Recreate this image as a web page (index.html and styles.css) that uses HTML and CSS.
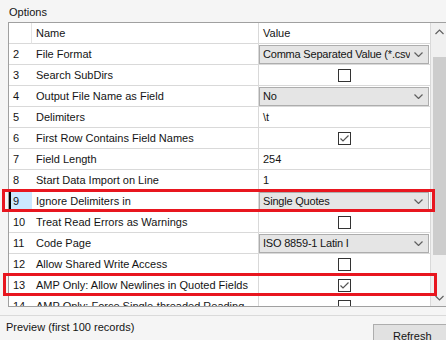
FILE: index.html
```html
<!DOCTYPE html>
<html lang="en">
<head>
    <meta charset="UTF-8">
    <title>Input Data Options</title>
    <link rel="stylesheet" href="styles.css">
</head>
<body>
    <div class="options-title">Options</div>
    <div class="grid-frame">
        <div class="grid">
            <div class="row header">
                <div class="cell num"></div>
                <div class="cell name">Name</div>
                <div class="cell value">Value</div>
            </div>
            <div class="row">
                <div class="cell num">2</div>
                <div class="cell name">File Format</div>
                <div class="cell value"><div class="combo"><span>Comma Separated Value (*.csv)</span><svg class="chev" width="9" height="5" viewBox="0 0 9 5"><polyline points="0.5,0.5 4.5,4.5 8.5,0.5" /></svg></div></div>
            </div>
            <div class="row">
                <div class="cell num">3</div>
                <div class="cell name">Search SubDirs</div>
                <div class="cell value check"><svg width="13" height="13" viewBox="0 0 13 13"><rect x="0.5" y="0.5" width="12" height="12" /></svg></div>
            </div>
            <div class="row">
                <div class="cell num">4</div>
                <div class="cell name">Output File Name as Field</div>
                <div class="cell value"><div class="combo"><span>No</span><svg class="chev" width="9" height="5" viewBox="0 0 9 5"><polyline points="0.5,0.5 4.5,4.5 8.5,0.5" /></svg></div></div>
            </div>
            <div class="row">
                <div class="cell num">5</div>
                <div class="cell name">Delimiters</div>
                <div class="cell value">\t</div>
            </div>
            <div class="row">
                <div class="cell num">6</div>
                <div class="cell name">First Row Contains Field Names</div>
                <div class="cell value check"><svg width="13" height="13" viewBox="0 0 13 13"><rect x="0.5" y="0.5" width="12" height="12" /><polyline class="tick" points="2.5,6.5 5,9 10.5,3.5" /></svg></div>
            </div>
            <div class="row">
                <div class="cell num">7</div>
                <div class="cell name">Field Length</div>
                <div class="cell value">254</div>
            </div>
            <div class="row">
                <div class="cell num">8</div>
                <div class="cell name">Start Data Import on Line</div>
                <div class="cell value">1</div>
            </div>
            <div class="row selected">
                <div class="cell num">9</div>
                <div class="cell name">Ignore Delimiters in</div>
                <div class="cell value"><div class="combo"><span>Single Quotes</span><svg class="chev" width="9" height="5" viewBox="0 0 9 5"><polyline points="0.5,0.5 4.5,4.5 8.5,0.5" /></svg></div></div>
            </div>
            <div class="row">
                <div class="cell num">10</div>
                <div class="cell name">Treat Read Errors as Warnings</div>
                <div class="cell value check"><svg width="13" height="13" viewBox="0 0 13 13"><rect x="0.5" y="0.5" width="12" height="12" /></svg></div>
            </div>
            <div class="row">
                <div class="cell num">11</div>
                <div class="cell name">Code Page</div>
                <div class="cell value"><div class="combo"><span>ISO 8859-1 Latin I</span><svg class="chev" width="9" height="5" viewBox="0 0 9 5"><polyline points="0.5,0.5 4.5,4.5 8.5,0.5" /></svg></div></div>
            </div>
            <div class="row">
                <div class="cell num">12</div>
                <div class="cell name">Allow Shared Write Access</div>
                <div class="cell value check"><svg width="13" height="13" viewBox="0 0 13 13"><rect x="0.5" y="0.5" width="12" height="12" /></svg></div>
            </div>
            <div class="row">
                <div class="cell num">13</div>
                <div class="cell name">AMP Only: Allow Newlines in Quoted Fields</div>
                <div class="cell value check"><svg width="13" height="13" viewBox="0 0 13 13"><rect x="0.5" y="0.5" width="12" height="12" /><polyline class="tick" points="2.5,6.5 5,9 10.5,3.5" /></svg></div>
            </div>
            <div class="row">
                <div class="cell num">14</div>
                <div class="cell name">AMP Only: Force Single-threaded Reading</div>
                <div class="cell value check"><svg width="13" height="13" viewBox="0 0 13 13"><rect x="0.5" y="0.5" width="12" height="12" /></svg></div>
            </div>
        </div>
        <div class="vscroll">
            <div class="arrow"><svg width="9" height="6" viewBox="0 0 9 6"><polyline points="0.5,5 4.5,1 8.5,5" /></svg></div>
            <div class="track"><div class="thumb"></div></div>
            <div class="arrow"><svg width="9" height="6" viewBox="0 0 9 6"><polyline points="0.5,1 4.5,5 8.5,1" /></svg></div>
        </div>
    </div>
    <div class="preview-bar">
        <div class="preview-label">Preview (first 100 records)</div>
        <button class="refresh">Refresh</button>
    </div>

    <div class="mark mark-row9"></div>
    <div class="mark mark-row13"></div>
</body>
</html>
```

FILE: styles.css
```css
body {
    margin: 0;
    width: 446px;
    height: 340px;
    overflow: hidden;
    position: relative;
    background-color: #f5f5f5;
    font-family: "Liberation Sans", Arial, sans-serif;
    font-size: 11px;
    color: #141414;
}
.options-title {
    height: 22px;
    padding-left: 9px;
    line-height: 22px;
    box-sizing: border-box;
    padding-top: 1px;
}
.grid-frame {
    margin-left: 8px;
    width: 446px;
    height: 285px;
    border: 1px solid #a0a0a0;
    box-sizing: border-box;
    background: #fff;
    display: flex;
    overflow: hidden;
}
.grid {
    width: 422px;
    flex: none;
    overflow: hidden;
}
.row {
    display: grid;
    grid-template-columns: 23px 227px 172px;
    height: 21px;
}
.cell {
    box-sizing: border-box;
    border-bottom: 1px solid #d9d9d9;
    line-height: 20px;
    white-space: nowrap;
    overflow: hidden;
}
.num {
    padding-left: 4px;
}
.name {
    padding-left: 4px;
    border-right: 1px solid #d9d9d9;
}
.value {
    padding-left: 4px;
    border-right: 1px solid #d9d9d9;
}
.header .num {
    border-right: 1px solid #e3e3e3;
}
.check {
    display: flex;
    justify-content: center;
    align-items: center;
    padding-left: 0;
}
.check rect {
    fill: #fff;
    stroke: #333;
}
.check .tick {
    fill: none;
    stroke: #555;
    stroke-width: 1.2;
}
.value:has(.combo) {
    padding: 1px 1px 0 0;
}
.combo {
    height: 19px;
    box-sizing: border-box;
    border: 1px solid #adadad;
    background: #e5e5e5;
    display: flex;
    align-items: center;
    padding-left: 3px;
    line-height: 17px;
}
.combo span {
    flex: 1;
    overflow: hidden;
    white-space: nowrap;
    letter-spacing: -0.2px;
}
.chev {
    flex: none;
    margin: 0 5px 0 4px;
}
.chev polyline,
.arrow polyline {
    fill: none;
    stroke: #606060;
    stroke-width: 1.2;
}
.selected .num {
    background: #cce8ff;
    border-left: 2px solid #000;
    border-top: 1px solid #000;
    padding-left: 2px;
    line-height: 19px;
}
.selected .name {
    border-top: 1px solid #000;
    line-height: 19px;
}
.vscroll {
    width: 17px;
    flex: none;
    background: #f0f0f0;
    display: flex;
    flex-direction: column;
}
.arrow {
    height: 17px;
    display: flex;
    align-items: center;
    justify-content: center;
}
.track {
    flex: 1;
    padding: 17px 1px 0 2px;
}
.thumb {
    height: 198px;
    background: #cdcdcd;
}
.preview-bar {
    margin-top: 8px;
    border-top: 1px solid #dadada;
    display: flex;
    justify-content: space-between;
    align-items: flex-start;
}
.preview-label {
    padding: 3px 0 0 6px;
    line-height: 16px;
}
.refresh {
    margin-top: 8px;
    width: 76px;
    height: 24px;
    margin-right: -3px;
    background: #e1e1e1;
    border: 1px solid #adadad;
    font-family: "Liberation Sans", Arial, sans-serif;
    font-size: 11px;
    color: #141414;
    text-align: left;
    padding: 0 0 0 19px;
}
.mark {
    position: absolute;
    border: 3px solid #e8161f;
    box-sizing: border-box;
    height: 23px;
}
.mark-row9 {
    left: 2px;
    top: 189px;
    width: 433px;
}
.mark-row13 {
    left: 3px;
    top: 273px;
    width: 434px;
}
```
